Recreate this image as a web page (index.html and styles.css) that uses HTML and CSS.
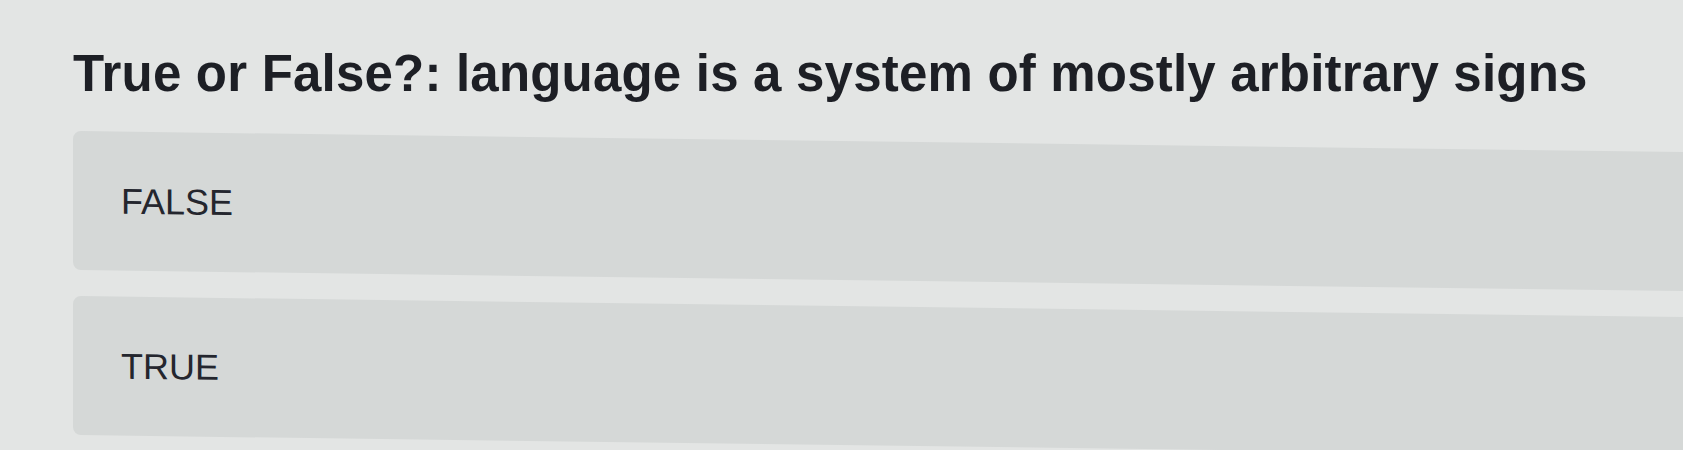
FILE: index.html
```html
<!DOCTYPE html>
<html lang="en">

<head>
  <meta charset="UTF-8">
  <meta name="viewport" content="width=device-width, initial-scale=1.0">
  <title>True or False</title>
  <link rel="stylesheet" href="styles.css">
</head>

<body>
  <div class="question">
    <h1 class="question-title">True or False?: language is a system of mostly arbitrary signs</h1>

    <!-- answer choices -->
    <div class="choices">
      <div class="choice">FALSE</div>
      <div class="choice">TRUE</div>
    </div>
  </div>
</body>

</html>
```

FILE: styles.css
```css
html,
body {
  margin: 0;
  height: 100%;
  overflow: hidden;
}

body {
  background-color: #e3e5e4;
  font-family: "Liberation Sans", Arial, sans-serif;
  color: #24262e;
}

.question {
  padding: 44px 0 0 73px;
}

.question-title {
  margin: 0;
  font-size: 51px;
  font-weight: bold;
  line-height: 60px;
  letter-spacing: 0.2px;
  color: #1d1f25;
}

.choices {
  margin-top: 27px;
  display: flex;
  flex-direction: column;
  gap: 26px;
  /* the row tilts a bit to the right */
  transform: skewY(0.75deg);
  transform-origin: left top;
}

.choice {
  height: 139px;
  margin-right: -20px;
  padding-left: 48px;
  display: flex;
  align-items: center;
  background-color: #d5d8d7;
  border-radius: 8px 0 0 8px;
  font-size: 36px;
}
```
